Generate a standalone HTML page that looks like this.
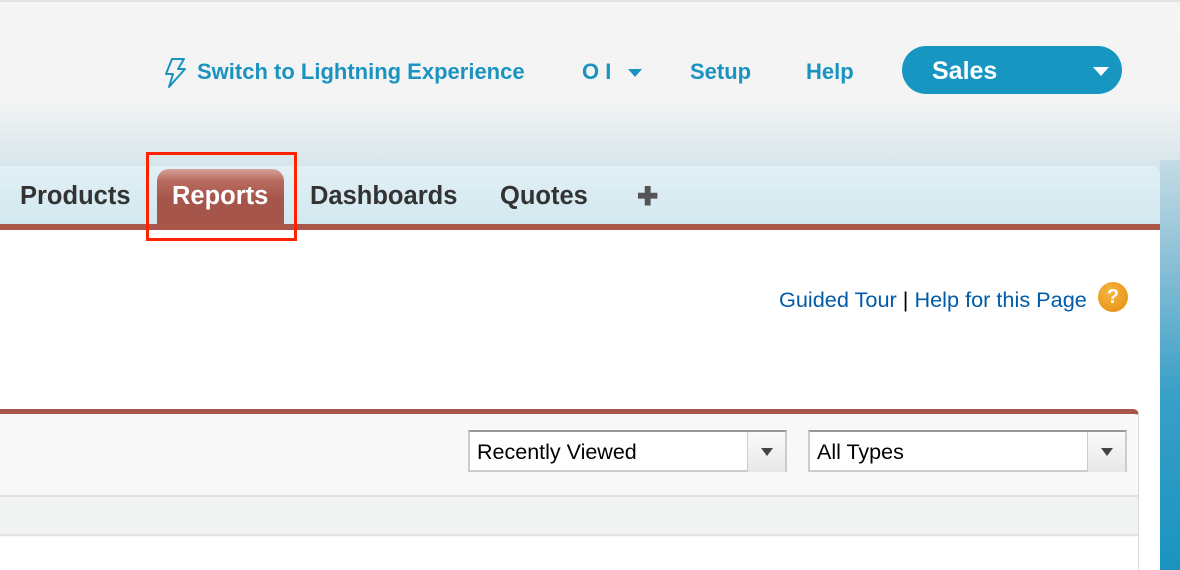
<!DOCTYPE html>
<html><head><style>
*{margin:0;padding:0;box-sizing:border-box}
body{width:1180px;height:570px;overflow:hidden;position:relative;font-family:"Liberation Sans",Arial,sans-serif;
background:linear-gradient(180deg,#f5f5f5 0px,#f4f4f4 100px,#d9e7ec 160px,#c4dce5 200px);}
.rightbg{position:absolute;left:1160px;top:160px;width:20px;height:410px;background:linear-gradient(180deg,#c4dce5 0,#8cc0d6 100px,#3aa0c8 230px,#1a93c0 410px)}
.top{position:absolute;left:0;top:0;width:1180px;height:2px;background:#e2e2e2}
.hl{position:absolute;top:59px;font-size:22px;font-weight:bold;color:#1a93c1;white-space:nowrap}
.sales{position:absolute;left:902px;top:46px;width:220px;height:48px;border-radius:24px;background:#1896c2;color:#fff;font-weight:bold;font-size:25px;padding:11px 0 0 30px}
.tabbar{position:absolute;left:0;top:166px;width:1160px;height:58px;border-radius:0 9px 0 0;background:linear-gradient(180deg,#e1f0f6,#d2e8ef)}
.redbar{position:absolute;left:0;top:224px;width:1160px;height:6px;background:#a8574a}
.content{position:absolute;left:0;top:230px;width:1160px;height:340px;background:#fff}
.tab{position:absolute;top:182px;font-size:25.5px;font-weight:bold;color:#333;white-space:nowrap}
.rep{position:absolute;left:157px;top:169px;width:127px;height:55px;border-radius:12px 12px 0 0;background:linear-gradient(180deg,#d4a197 0,#b96b5f 12px,#a5554a 30px,#a5554a)}
.box{position:absolute;left:146px;top:152px;width:151px;height:89px;border:3px solid #ff2200}
.panel{position:absolute;left:0;top:409px;width:1139px;height:161px;border-top:5px solid #a8574a;border-right:1px solid #ddd;border-radius:0 6px 0 0;background:#f8f8f8}
.sub{position:absolute;left:0;top:495px;width:1138px;height:41px;background:#f1f2f2;border-top:2px solid #e1e1e1;border-bottom:2px solid #e1e1e1}
.white{position:absolute;left:0;top:537px;width:1138px;height:33px;background:#fff}
.sel{position:absolute;top:430px;width:319px;height:42px;background:#fff;border:2px solid #ccc;border-top-color:#999;font-size:21.5px;padding:8px 0 0 7px;color:#000}
.sel .b{position:absolute;right:0;top:0;width:38px;height:40px;border-left:1px solid #ccc;background:linear-gradient(#fafafa,#e8e8e8)}
.sel .b:after{content:"";position:absolute;left:13px;top:16px;border-left:6px solid transparent;border-right:6px solid transparent;border-top:8px solid #444}
</style></head><body>
<div class="rightbg"></div>
<div class="top"></div>
<svg style="position:absolute;left:163px;top:57px" width="24" height="32" viewBox="0 0 24 32"><path d="M9 2 L21 2 L15 12 L22 12 L6 30 L10 17 L3 17 Z" fill="none" stroke="#1a93c1" stroke-width="2" stroke-linejoin="round"/></svg>
<div class="hl" style="left:197px">Switch to Lightning Experience</div>
<div class="hl" style="left:582px">O I</div>
<div style="position:absolute;left:628px;top:69px;border-left:7px solid transparent;border-right:7px solid transparent;border-top:8px solid #1a93c1"></div>
<div class="hl" style="left:690px">Setup</div>
<div class="hl" style="left:806px">Help</div>
<div class="sales">Sales</div>
<div style="position:absolute;left:1093px;top:67px;border-left:8px solid transparent;border-right:8px solid transparent;border-top:9px solid #fff"></div>
<div class="tabbar"></div>
<div class="redbar"></div>
<div class="content"></div>
<div class="rep"></div>
<div class="tab" style="left:20px">Products</div>
<div class="tab" style="left:172px;color:#fff">Reports</div>
<div class="tab" style="left:310px">Dashboards</div>
<div class="tab" style="left:500px">Quotes</div>
<div class="tab" style="left:637px;color:#555">✚</div>
<div class="box"></div>
<div style="position:absolute;left:779px;top:287px;font-size:21.7px;color:#015ba7;white-space:nowrap">Guided Tour <span style="color:#000">|</span> Help for this Page</div>
<div style="position:absolute;left:1098px;top:282px;width:30px;height:30px;border-radius:50%;background:radial-gradient(circle at 40% 35%,#f8b640,#e48a10);color:#fff;font-weight:bold;font-size:20px;text-align:center;line-height:30px">?</div>
<div class="panel"></div>
<div class="sub"></div>
<div class="white"></div>
<div class="sel" style="left:468px">Recently Viewed<div class="b"></div></div>
<div class="sel" style="left:808px">All Types<div class="b"></div></div>
</body></html>
